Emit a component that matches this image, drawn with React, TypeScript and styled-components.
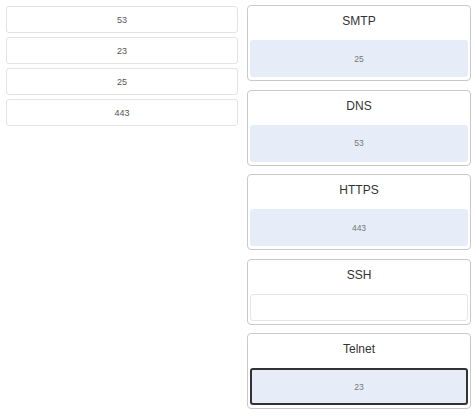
import React from "react";
import styled, {createGlobalStyle} from "styled-components";

const GlobalStyle = createGlobalStyle`
  body {
    margin: 0;
    background: #ffffff;
    font-family: "Liberation Sans", Arial, sans-serif;
  }
`;

const Page = styled.div`
  display: flex;
  align-items: flex-start;
  gap: 9px;
  padding: 5px 3px 0 6px;
`;

const Pool = styled.div`
  display: flex;
  flex-direction: column;
  gap: 4px;
  width: 232px;
  padding-top: 1px;
`;

const Chip = styled.div`
  height: 27px;
  box-sizing: border-box;
  border: 1px solid #e3e3e3;
  border-radius: 3px;
  background: #fff;
  display: flex;
  align-items: center;
  justify-content: center;
  font-size: 9px;
  color: #555;
`;

const Targets = styled.div`
  flex: 1;
  display: flex;
  flex-direction: column;
  gap: 8.5px;
`;

const Card = styled.div`
  box-sizing: border-box;
  border: 1px solid #c9c9c9;
  border-radius: 4px;
  padding: 0 2px 3px;
  background: #fff;
`;

const Title = styled.div`
  height: 34px;
  box-sizing: border-box;
  padding-top: 8px;
  line-height: 14px;
  text-align: center;
  font-size: 12px;
  color: #333;
`;

const Slot = styled.div<{$filled: boolean; $active?: boolean}>`
  box-sizing: border-box;
  height: ${(p) => (p.$filled ? "37px" : "27px")};
  border-radius: 3px;
  border: ${(p) =>
    p.$active ? "2px solid #333" : p.$filled ? "1px solid transparent" : "1px solid #e6e6e6"};
  background: ${(p) => (p.$filled ? "#e6edf8" : "#fff")};
  display: flex;
  align-items: center;
  justify-content: center;
  font-size: 8.5px;
  color: #777;
`;

const pool = ["53", "23", "25", "443"];

const targets = [
  {name: "SMTP", value: "25"},
  {name: "DNS", value: "53"},
  {name: "HTTPS", value: "443"},
  {name: "SSH", value: ""},
  {name: "Telnet", value: "23", active: true},
];

export default function App() {
  return (
    <>
      <GlobalStyle />
      <Page>
        <Pool>
          {pool.map((p) => (
            <Chip key={p}>{p}</Chip>
          ))}
        </Pool>
        <Targets>
          {targets.map((t) => (
            <Card key={t.name}>
              <Title>{t.name}</Title>
              <Slot $filled={!!t.value} $active={t.active}>
                {t.value}
              </Slot>
            </Card>
          ))}
        </Targets>
      </Page>
    </>
  );
}
